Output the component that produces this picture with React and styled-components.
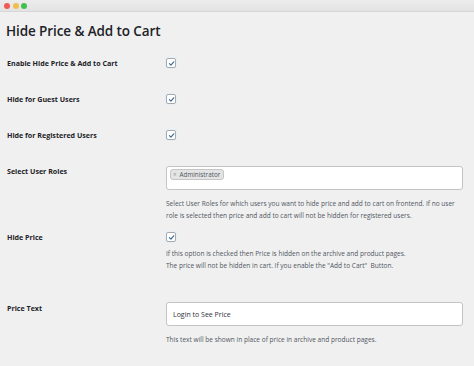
import React from "react";
import styled, { createGlobalStyle } from "styled-components";

const Global = createGlobalStyle`
  html, body { margin: 0; padding: 0; background: #f0f0f1; }
  body { font-family: "Open Sans", "Noto Sans", Arial, sans-serif; color: #1d2327; }
`;

const Window = styled.div`
  width: 474px;
  height: 366px;
  overflow: hidden;
  background: #f0f0f1;
  display: flex;
  flex-direction: column;
`;

const TitleBar = styled.div`
  height: 12px;
  flex: none;
  background: linear-gradient(#ececec, #e3e3e3);
  border-bottom: 1px solid #d6d6d6;
  display: flex;
  align-items: center;
  gap: 2.5px;
  padding-left: 4px;
  box-sizing: border-box;
`;

const Dot = styled.span`
  width: 6px;
  height: 6px;
  border-radius: 50%;
  background: ${(p) => p.$c};
`;

const Content = styled.div`
  padding: 0 11px 0 7px;
`;

const Title = styled.h1`
  margin: 10px 0 0 -1px;
  font-size: 13.5px;
  line-height: 18px;
  font-weight: 600;
  color: #1d2327;
  letter-spacing: -0.1px;
`;

const Form = styled.div`
  display: flex;
  flex-direction: column;
  margin-top: 11px;
`;

const Row = styled.div`
  display: grid;
  grid-template-columns: 159px 297px;
  padding-top: ${(p) => p.$pt}px;
  padding-bottom: ${(p) => p.$pb || 0}px;
  min-height: ${(p) => p.$h || 0}px;
  box-sizing: border-box;
`;

const Label = styled.div`
  font-size: 7.1px;
  line-height: 12px;
  font-weight: 700;
  color: #1d2327;
`;

const Field = styled.div`
  display: flex;
  flex-direction: column;
  padding-top: ${(p) => p.$pt || 0}px;
`;

const CheckLine = styled.div`
  height: 12px;
  display: flex;
  align-items: center;
`;

const Box = styled.span`
  width: 8px;
  height: 8px;
  border: 1px solid #a7aaad;
  border-radius: 2px;
  background: #fff;
  display: flex;
  align-items: center;
  justify-content: center;
  box-shadow: 0 0 0 1px #e6eef6;
`;

const Check = () => (
  <Box>
    <svg width="7" height="7" viewBox="0 0 10 10">
      <path d="M2 5.2 L4.2 7.3 L8.2 2.6" fill="none" stroke="#3f6c9a" strokeWidth="1.7" strokeLinecap="round" strokeLinejoin="round" />
    </svg>
  </Box>
);

const SelectBox = styled.div`
  height: 24px;
  box-sizing: border-box;
  background: #fff;
  border: 1px solid #c3c4c7;
  border-radius: 3px;
  padding: 2px 3px;
  display: flex;
  align-items: flex-start;
`;

const Tag = styled.span`
  font-size: 6.3px;
  line-height: 9px;
  color: #50575e;
  background: #e4e4e4;
  border: 1px solid #c5c5c5;
  border-radius: 3px;
  padding: 0 3px 0 2px;
  display: inline-flex;
  gap: 3px;
`;

const Remove = styled.span`
  color: #999;
`;

const TextInput = styled.div`
  height: 24px;
  box-sizing: border-box;
  background: #fff;
  border: 1px solid #c3c4c7;
  border-radius: 3px;
  padding: 0 6px;
  font-size: 7px;
  color: #2c3338;
  display: flex;
  align-items: center;
`;

const Desc = styled.p`
  margin: ${(p) => p.$mt}px 0 0;
  font-size: 6.55px;
  line-height: 12px;
  color: #50575e;
`;

export default function App() {
  return (
    <>
      <Global />
      <Window>
        <TitleBar>
          <Dot $c="#ee5b52" />
          <Dot $c="#f3bd4e" />
          <Dot $c="#3fc14f" />
        </TitleBar>
        <Content>
          <Title>Hide Price &amp; Add to Cart</Title>
          <Form>
            <Row $pt={6} $h={36}>
              <Label>Enable Hide Price &amp; Add to Cart</Label>
              <Field><CheckLine><Check /></CheckLine></Field>
            </Row>
            <Row $pt={6} $h={36}>
              <Label>Hide for Guest Users</Label>
              <Field><CheckLine><Check /></CheckLine></Field>
            </Row>
            <Row $pt={6} $h={36}>
              <Label>Hide for Registered Users</Label>
              <Field><CheckLine><Check /></CheckLine></Field>
            </Row>
            <Row $pt={6} $pb={3}>
              <Label>Select User Roles</Label>
              <Field $pt={1}>
                <SelectBox>
                  <Tag><Remove>×</Remove>Administrator</Tag>
                </SelectBox>
                <Desc $mt={8}>
                  Select User Roles for which users you want to hide price and add to cart on frontend. If no user role is selected then price and add to cart will not be hidden for registered users.
                </Desc>
              </Field>
            </Row>
            <Row $pt={6} $pb={24}>
              <Label>Hide Price</Label>
              <Field>
                <CheckLine><Check /></CheckLine>
                <Desc $mt={5}>
                  If this option is checked then Price is hidden on the archive and product pages.
                  <br />
                  The price will not be hidden in cart. If you enable the "Add to Cart"&nbsp; Button.
                </Desc>
              </Field>
            </Row>
            <Row $pt={6}>
              <Label>Price Text</Label>
              <Field $pt={0}>
                <TextInput>Login to See Price</TextInput>
                <Desc $mt={8}>This text will be shown in place of price in archive and product pages.</Desc>
              </Field>
            </Row>
          </Form>
        </Content>
      </Window>
    </>
  );
}
